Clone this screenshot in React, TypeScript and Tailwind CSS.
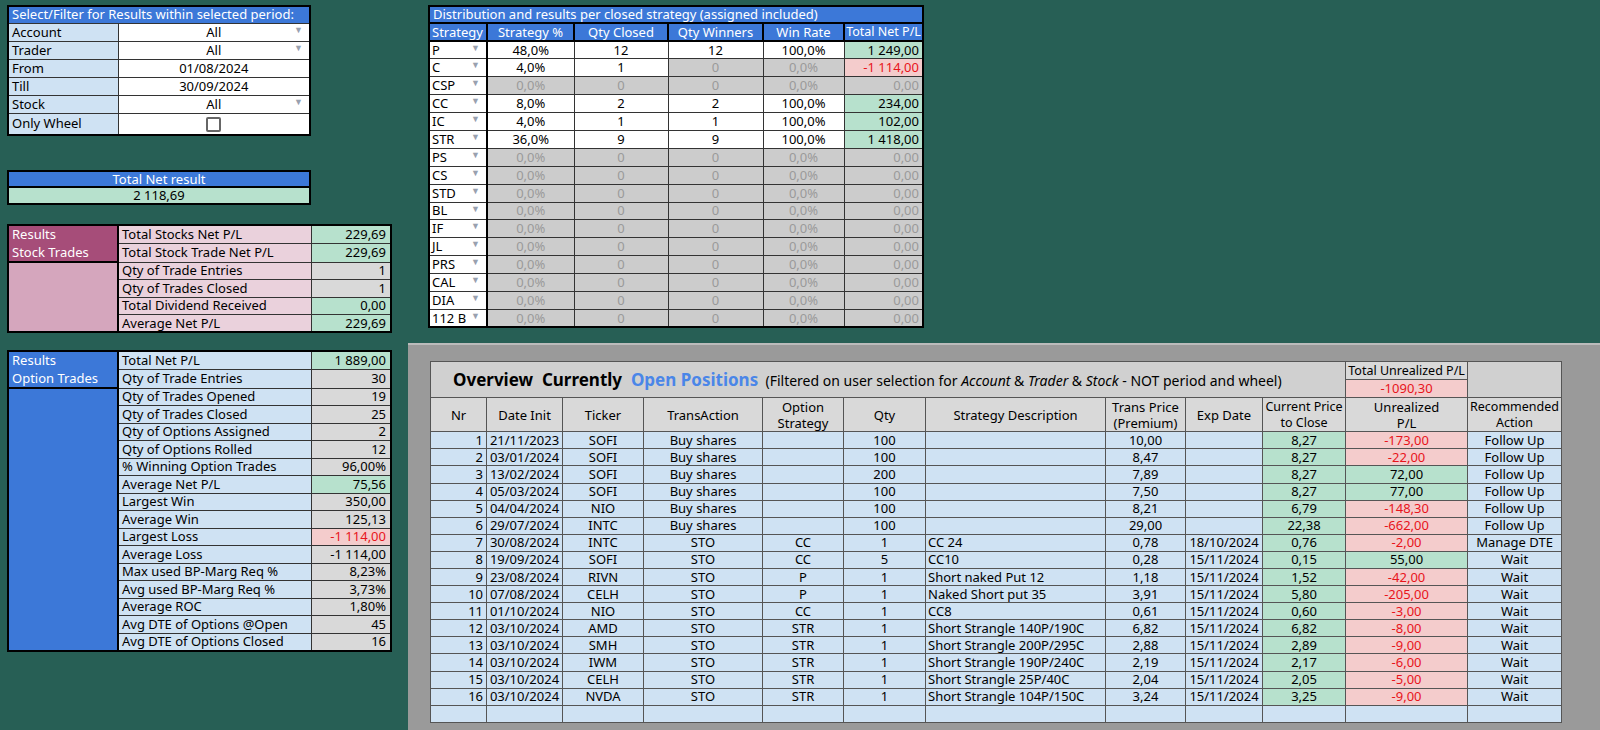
import React from "react";

// sheet colours
const BLUE = "bg-[#3c78d8]";
const LBLUE = "bg-[#cfe2f3]";
const GREEN = "bg-[#b7e1cd]";
const PINK = "bg-[#f4cccc]";
const GRAY = "bg-[#d9d9d9]";

function Arrow() {
  return <span className="absolute right-[6px] top-[1px] text-[9px] text-gray-400">▼</span>;
}

function FilterBox() {
  const rows = [
    { k: "Account", v: "All", dd: true },
    { k: "Trader", v: "All", dd: true },
    { k: "From", v: "01/08/2024" },
    { k: "Till", v: "30/09/2024" },
    { k: "Stock", v: "All", dd: true },
  ];
  return (
    <table className="table-fixed border-collapse w-[304px] border-2 border-black">
      <colgroup>
        <col className="w-[110px]" />
        <col />
      </colgroup>
      <tbody>
        <tr className="h-[17px]">
          <td colSpan={2} className={`${BLUE} text-white px-[3px] leading-none`}>
            Select/Filter for Results within selected period:
          </td>
        </tr>
        {rows.map((r) => (
          <tr key={r.k} className="h-[18px]">
            <td className={`${LBLUE} border border-[#333] px-[3px] leading-none`}>{r.k}</td>
            <td className="bg-white border border-[#333] text-center relative leading-none">
              {r.v}
              {r.dd && <Arrow />}
            </td>
          </tr>
        ))}
        <tr className="h-[22px]">
          <td className={`${LBLUE} border border-[#333] px-[3px] leading-none`}>Only Wheel</td>
          <td className="bg-white border border-[#333] text-center">
            <span className="inline-block w-[15px] h-[15px] border-2 border-[#666] rounded-[2px] align-middle" />
          </td>
        </tr>
      </tbody>
    </table>
  );
}

function TotalNet() {
  return (
    <div className="w-[304px] border-2 border-black text-center leading-none">
      <div className={`${BLUE} text-white h-[16px] flex items-center justify-center border-b-2 border-black`}>Total Net result</div>
      <div className={`${GREEN} h-[15px] flex items-center justify-center`}>2 118,69</div>
    </div>
  );
}

type Stat = { k: string; v: string; c: string; red?: boolean };

function StatBlock({ title, head, body, label, stats }: { title: string[]; head: string; body: string; label: string; stats: Stat[] }) {
  return (
    <table className="table-fixed border-collapse w-[385px] border-2 border-black leading-none">
      <colgroup>
        <col className="w-[110px]" />
        <col className="w-[193px]" />
        <col />
      </colgroup>
      <tbody>
        {stats.map((s, i) => (
          <tr key={s.k} className="h-[17.5px]">
            {i === 0 && (
              <td rowSpan={2} className={`${head} text-white px-[3px] align-top border-2 border-black leading-[17.5px]`}>
                {title[0]}
                <br />
                {title[1]}
              </td>
            )}
            {i === 2 && <td rowSpan={stats.length - 2} className={`${body} border-2 border-black`} />}
            <td className={`${label} border border-[#333] border-l-2 border-l-black px-[3px] whitespace-nowrap`}>{s.k}</td>
            <td className={`${s.c} border border-[#333] text-right px-[4px] ${s.red ? "text-[#e8141b]" : ""}`}>{s.v}</td>
          </tr>
        ))}
      </tbody>
    </table>
  );
}

const stockStats: Stat[] = [
  { k: "Total Stocks Net P/L", v: "229,69", c: GREEN },
  { k: "Total Stock Trade Net P/L", v: "229,69", c: GREEN },
  { k: "Qty of Trade Entries", v: "1", c: GRAY },
  { k: "Qty of Trades Closed", v: "1", c: GRAY },
  { k: "Total Dividend Received", v: "0,00", c: GREEN },
  { k: "Average Net P/L", v: "229,69", c: GREEN },
];

const optionStats: Stat[] = [
  { k: "Total Net P/L", v: "1 889,00", c: GREEN },
  { k: "Qty of Trade Entries", v: "30", c: GRAY },
  { k: "Qty of Trades Opened", v: "19", c: GRAY },
  { k: "Qty of Trades Closed", v: "25", c: GRAY },
  { k: "Qty of Options Assigned", v: "2", c: GRAY },
  { k: "Qty of Options Rolled", v: "12", c: GRAY },
  { k: "% Winning Option Trades", v: "96,00%", c: GRAY },
  { k: "Average Net P/L", v: "75,56", c: GREEN },
  { k: "Largest Win", v: "350,00", c: GRAY },
  { k: "Average Win", v: "125,13", c: GRAY },
  { k: "Largest Loss", v: "-1 114,00", c: PINK, red: true },
  { k: "Average Loss", v: "-1 114,00", c: GRAY },
  { k: "Max used BP-Marg Req %", v: "8,23%", c: GRAY },
  { k: "Avg used BP-Marg Req %", v: "3,73%", c: GRAY },
  { k: "Average ROC", v: "1,80%", c: GRAY },
  { k: "Avg DTE of Options @Open", v: "45", c: GRAY },
  { k: "Avg DTE of Options Closed", v: "16", c: GRAY },
];

type Strat = { s: string; pct: string; closed: string; win: string; rate: string; net: string };
const active: Record<string, Strat> = {
  P: { s: "P", pct: "48,0%", closed: "12", win: "12", rate: "100,0%", net: "1 249,00" },
  C: { s: "C", pct: "4,0%", closed: "1", win: "0", rate: "0,0%", net: "-1 114,00" },
  CC: { s: "CC", pct: "8,0%", closed: "2", win: "2", rate: "100,0%", net: "234,00" },
  IC: { s: "IC", pct: "4,0%", closed: "1", win: "1", rate: "100,0%", net: "102,00" },
  STR: { s: "STR", pct: "36,0%", closed: "9", win: "9", rate: "100,0%", net: "1 418,00" },
};
const stratNames = ["P", "C", "CSP", "CC", "IC", "STR", "PS", "CS", "STD", "BL", "IF", "JL", "PRS", "CAL", "DIA", "112 B"];

function StrategyTable() {
  const hd = `${BLUE} text-white border-2 border-black text-center whitespace-nowrap`;
  return (
    <table className="table-fixed border-collapse w-[496px] border-2 border-black leading-none">
      <colgroup>
        <col className="w-[58px]" />
        <col className="w-[87px]" />
        <col className="w-[94px]" />
        <col className="w-[95px]" />
        <col className="w-[81px]" />
        <col />
      </colgroup>
      <tbody>
        <tr className="h-[17px]">
          <td colSpan={6} className={`${BLUE} text-white px-[3px]`}>Distribution and results per closed strategy (assigned included)</td>
        </tr>
        <tr className="h-[18px]">
          <td className={`${hd} text-left px-[2px]`}>Strategy</td>
          <td className={hd}>Strategy %</td>
          <td className={hd}>Qty Closed</td>
          <td className={hd}>Qty Winners</td>
          <td className={hd}>Win Rate</td>
          <td className={`${hd} text-[12.5px] overflow-hidden`}>Total Net P/L</td>
        </tr>
        {stratNames.map((n) => {
          const a = active[n];
          const g = "bg-[#cccccc] text-[#9a9a9a]";
          const c = "border border-[#333] text-center";
          const on = (v: boolean) => (v ? "bg-white" : g);
          const posWin = a && a.win !== "0";
          let net = `${g}`;
          if (a) net = a.net.startsWith("-") ? `${PINK} text-[#e8141b]` : GREEN;
          return (
            <tr key={n} className="h-[17.9px]">
              <td className="bg-white border border-[#333] border-r-2 border-r-black px-[2px] relative">
                {n}
                <Arrow />
              </td>
              <td className={`${c} ${on(!!a)}`}>{a ? a.pct : "0,0%"}</td>
              <td className={`${c} ${on(!!a)}`}>{a ? a.closed : "0"}</td>
              <td className={`${c} ${on(!!posWin)}`}>{a ? a.win : "0"}</td>
              <td className={`${c} ${on(!!posWin)}`}>{a ? a.rate : "0,0%"}</td>
              <td className={`border border-[#333] text-right px-[3px] ${net}`}>{a ? a.net : "0,00"}</td>
            </tr>
          );
        })}
      </tbody>
    </table>
  );
}

type Pos = [string, string, string, string, string, string, string, string, string, string, string, string];
const positions: Pos[] = [
  ["1", "21/11/2023", "SOFI", "Buy shares", "", "100", "", "10,00", "", "8,27", "-173,00", "Follow Up"],
  ["2", "03/01/2024", "SOFI", "Buy shares", "", "100", "", "8,47", "", "8,27", "-22,00", "Follow Up"],
  ["3", "13/02/2024", "SOFI", "Buy shares", "", "200", "", "7,89", "", "8,27", "72,00", "Follow Up"],
  ["4", "05/03/2024", "SOFI", "Buy shares", "", "100", "", "7,50", "", "8,27", "77,00", "Follow Up"],
  ["5", "04/04/2024", "NIO", "Buy shares", "", "100", "", "8,21", "", "6,79", "-148,30", "Follow Up"],
  ["6", "29/07/2024", "INTC", "Buy shares", "", "100", "", "29,00", "", "22,38", "-662,00", "Follow Up"],
  ["7", "30/08/2024", "INTC", "STO", "CC", "1", "CC 24", "0,78", "18/10/2024", "0,76", "-2,00", "Manage DTE"],
  ["8", "19/09/2024", "SOFI", "STO", "CC", "5", "CC10", "0,28", "15/11/2024", "0,15", "55,00", "Wait"],
  ["9", "23/08/2024", "RIVN", "STO", "P", "1", "Short naked Put 12", "1,18", "15/11/2024", "1,52", "-42,00", "Wait"],
  ["10", "07/08/2024", "CELH", "STO", "P", "1", "Naked Short put 35", "3,91", "15/11/2024", "5,80", "-205,00", "Wait"],
  ["11", "01/10/2024", "NIO", "STO", "CC", "1", "CC8", "0,61", "15/11/2024", "0,60", "-3,00", "Wait"],
  ["12", "03/10/2024", "AMD", "STO", "STR", "1", "Short Strangle 140P/190C", "6,82", "15/11/2024", "6,82", "-8,00", "Wait"],
  ["13", "03/10/2024", "SMH", "STO", "STR", "1", "Short Strangle 200P/295C", "2,88", "15/11/2024", "2,89", "-9,00", "Wait"],
  ["14", "03/10/2024", "IWM", "STO", "STR", "1", "Short Strangle 190P/240C", "2,19", "15/11/2024", "2,17", "-6,00", "Wait"],
  ["15", "03/10/2024", "CELH", "STO", "STR", "1", "Short Strangle 25P/40C", "2,04", "15/11/2024", "2,05", "-5,00", "Wait"],
  ["16", "03/10/2024", "NVDA", "STO", "STR", "1", "Short Strangle 104P/150C", "3,24", "15/11/2024", "3,25", "-9,00", "Wait"],
];

function OpenPositions() {
  const th = `${GRAY} border border-[#555] text-center leading-[16px]`;
  const td = "border border-[#555]";
  return (
    <table className="table-fixed border-collapse w-[1132px] border border-[#555] leading-none">
      <colgroup>
        <col className="w-[56px]" />
        <col className="w-[76px]" />
        <col className="w-[81px]" />
        <col className="w-[119px]" />
        <col className="w-[81px]" />
        <col className="w-[82px]" />
        <col className="w-[180px]" />
        <col className="w-[80px]" />
        <col className="w-[77px]" />
        <col className="w-[83px]" />
        <col className="w-[122px]" />
        <col />
      </colgroup>
      <tbody>
        <tr className="h-[18px]">
          <td colSpan={10} rowSpan={2} className="bg-[#d0d0d0] border border-[#555] px-[22px] whitespace-nowrap">
            <span className="font-bold text-[17px] text-black">Overview&nbsp; Currently&nbsp; </span>
            <span className="font-bold text-[17px] text-[#4a86e8]">Open Positions</span>
            <span className="text-[14px]">
              &nbsp; (Filtered on user selection for <i>Account</i> &amp; <i>Trader</i> &amp; <i>Stock</i> - NOT period and wheel)
            </span>
          </td>
          <td className={`${th} whitespace-nowrap text-[12.5px] overflow-hidden`}>Total Unrealized P/L</td>
          <td rowSpan={2} className="bg-[#d0d0d0] border border-[#555]" />
        </tr>
        <tr className="h-[18px]">
          <td className={`${PINK} border border-[#555] text-center text-[#e8141b]`}>-1090,30</td>
        </tr>
        <tr className="h-[34px]">
          <td className={th}>Nr</td>
          <td className={th}>Date Init</td>
          <td className={th}>Ticker</td>
          <td className={th}>TransAction</td>
          <td className={th}>Option<br />Strategy</td>
          <td className={th}>Qty</td>
          <td className={th}>Strategy Description</td>
          <td className={th}>Trans Price<br />(Premium)</td>
          <td className={th}>Exp Date</td>
          <td className={`${th} whitespace-nowrap text-[12.5px]`}>Current Price<br />to Close</td>
          <td className={th}>Unrealized<br />P/L</td>
          <td className={`${th} whitespace-nowrap text-[12.5px]`}>Recommended<br />Action</td>
        </tr>
        {positions.map((p) => {
          const neg = p[10].startsWith("-");
          return (
            <tr key={p[0]} className={`h-[17.1px] ${LBLUE}`}>
              <td className={`${td} text-right px-[3px]`}>{p[0]}</td>
              <td className={`${td} text-center`}>{p[1]}</td>
              <td className={`${td} text-center`}>{p[2]}</td>
              <td className={`${td} text-center`}>{p[3]}</td>
              <td className={`${td} text-center`}>{p[4]}</td>
              <td className={`${td} text-center`}>{p[5]}</td>
              <td className={`${td} px-[2px] whitespace-nowrap`}>{p[6]}</td>
              <td className={`${td} text-center`}>{p[7]}</td>
              <td className={`${td} text-center`}>{p[8]}</td>
              <td className={`${td} text-center ${GREEN}`}>{p[9]}</td>
              <td className={`${td} text-center ${neg ? `${PINK} text-[#e8141b]` : GREEN}`}>{p[10]}</td>
              <td className={`${td} text-center whitespace-nowrap`}>{p[11]}</td>
            </tr>
          );
        })}
        <tr className={`h-[17px] ${LBLUE}`}>
          {Array.from({ length: 12 }).map((_, i) => (
            <td key={i} className={td} />
          ))}
        </tr>
      </tbody>
    </table>
  );
}

export default function App() {
  return (
    <div className="w-[1600px] h-[730px] overflow-hidden bg-[#275f55] text-[13px] text-black font-['Lato','Liberation_Sans',sans-serif] flex">
      <div className="w-[408px] shrink-0 pl-[7px] pt-[5px] flex flex-col">
        <FilterBox />
        <div className="mt-[34px]">
          <TotalNet />
        </div>
        <div className="mt-[19px]">
          <StatBlock title={["Results", "Stock Trades"]} head="bg-[#a64d79]" body="bg-[#d5a6bd]" label="bg-[#ead1dc]" stats={stockStats} />
        </div>
        <div className="mt-[17px]">
          <StatBlock title={["Results", "Option Trades"]} head={BLUE} body={BLUE} label={LBLUE} stats={optionStats} />
        </div>
      </div>
      <div className="flex-1 flex flex-col pt-[5px]">
        <div className="pl-[20px]">
          <StrategyTable />
        </div>
        <div className="mt-[15px] flex-1 bg-[#9a9a9a] pl-[22px] pt-[16px] border-t-2 border-[#bbb]">
          <OpenPositions />
        </div>
      </div>
    </div>
  );
}
